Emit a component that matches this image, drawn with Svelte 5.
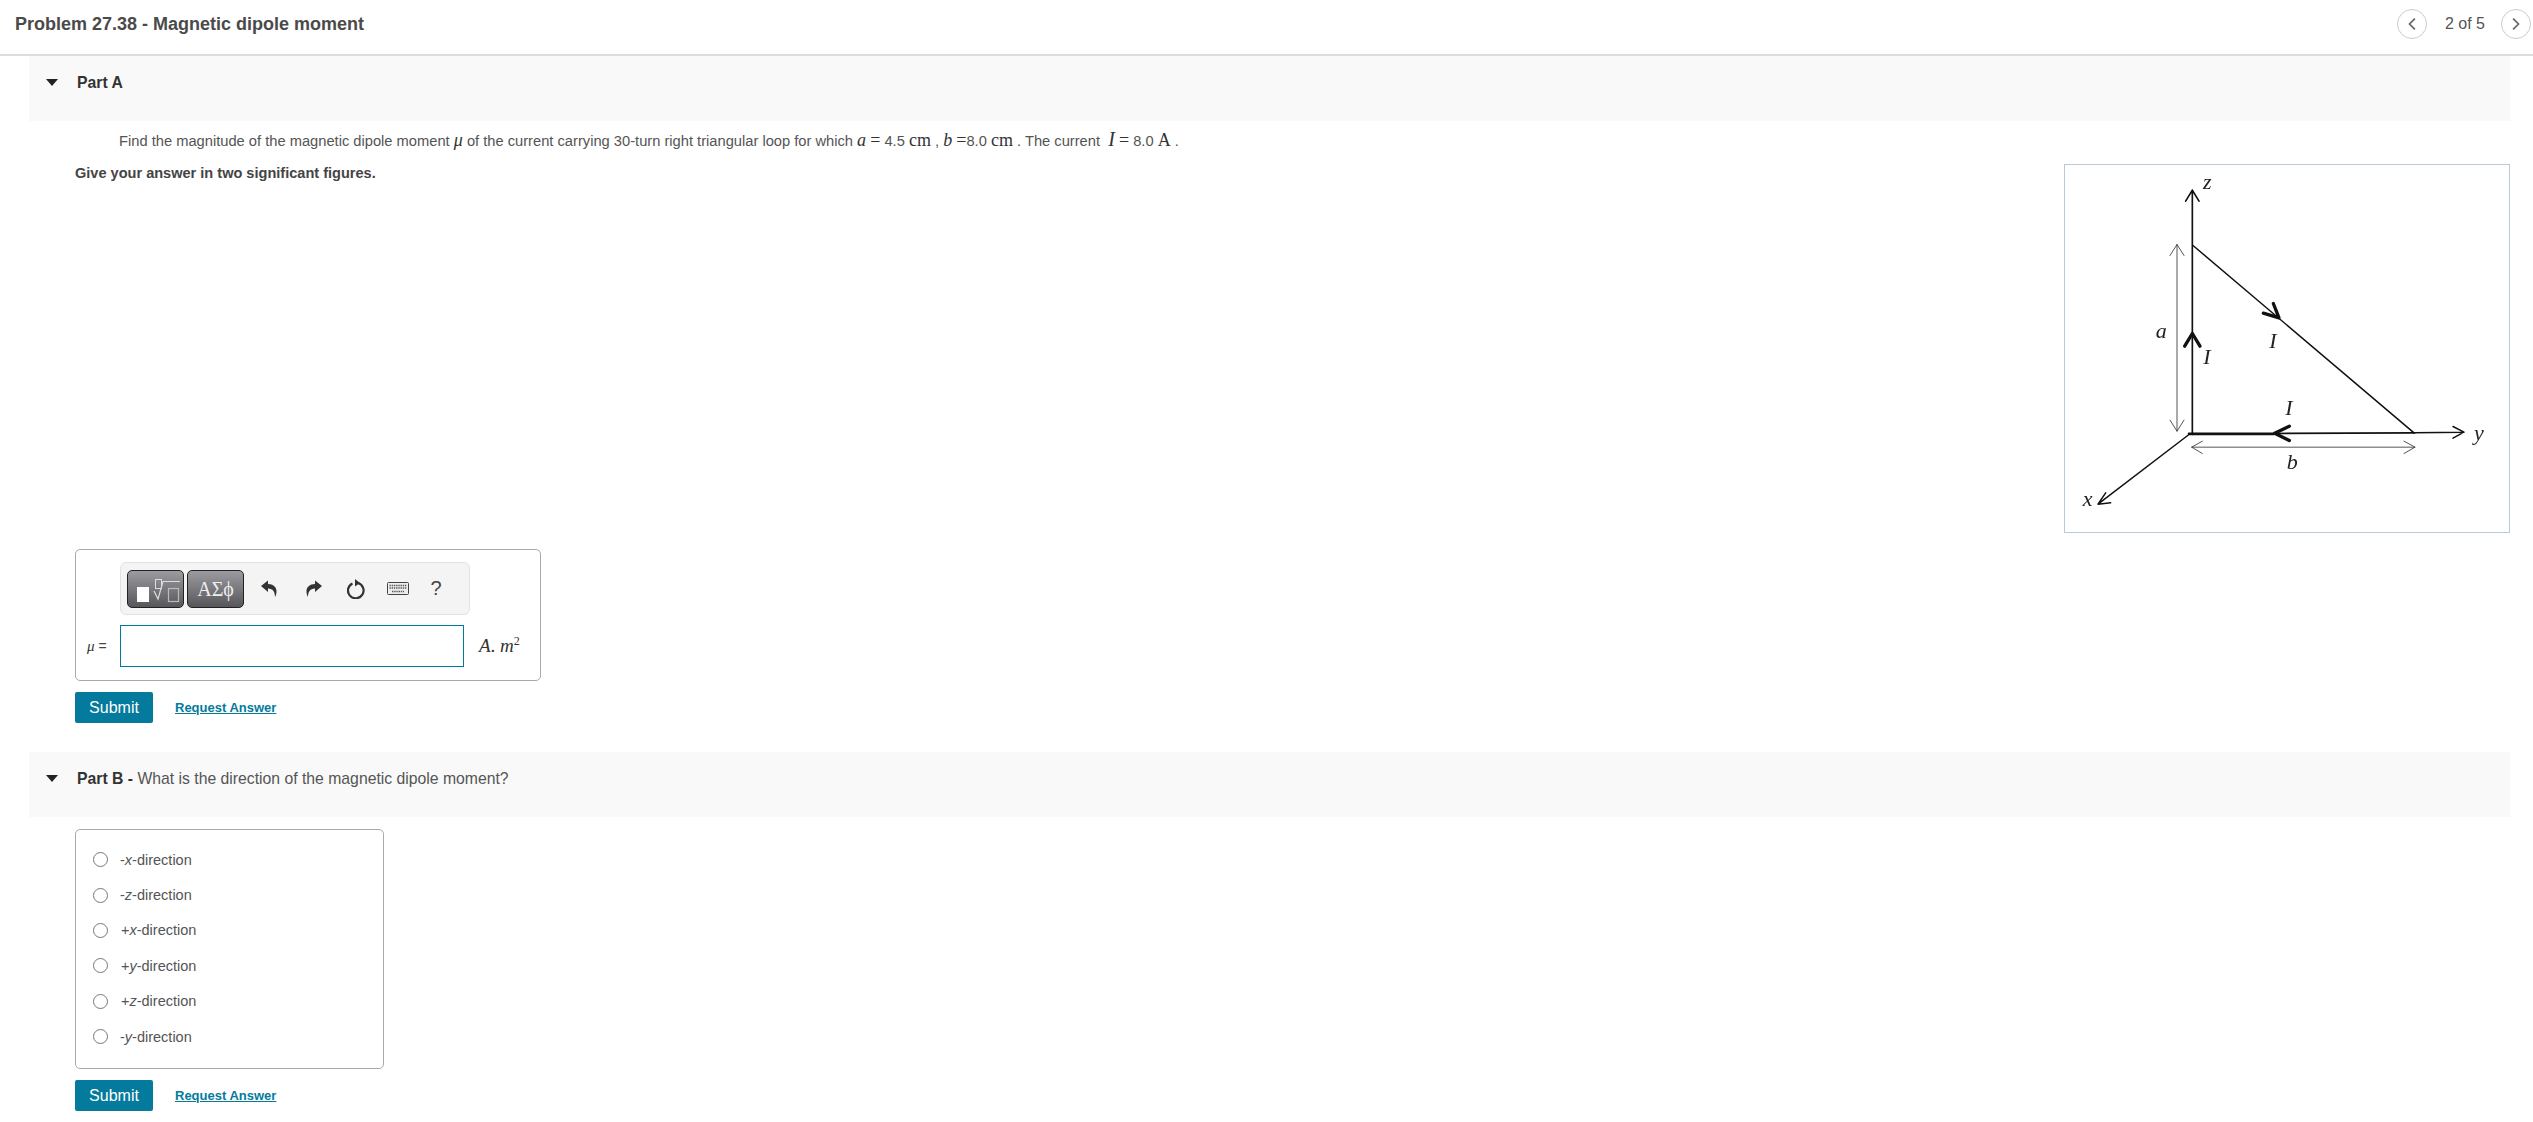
<script>
	const options = [
		{ sign: '-', axis: 'x' },
		{ sign: '-', axis: 'z' },
		{ sign: '+', axis: 'x' },
		{ sign: '+', axis: 'y' },
		{ sign: '+', axis: 'z' },
		{ sign: '-', axis: 'y' }
	];
	let choice = $state(null);
	let answer = $state('');
</script>

<div class="page">
	<header class="top">
		<h1>Problem 27.38 - Magnetic dipole moment</h1>
		<nav class="pager">
			<button class="round prev" aria-label="Previous">
				<svg viewBox="0 0 12 16" width="10" height="14"><path d="M9.5 1.5 L3 8 L9.5 14.5" /></svg>
			</button>
			<span class="count">2 of 5</span>
			<button class="round" aria-label="Next">
				<svg viewBox="0 0 12 16" width="10" height="14"><path d="M2.5 1.5 L9 8 L2.5 14.5" /></svg>
			</button>
		</nav>
	</header>

	<main class="parts">
		<section>
			<div class="band"><span class="caret"></span><strong>Part A</strong></div>
			<div class="body">
				<p class="prompt">
					Find the magnitude of the magnetic dipole moment <i class="m">μ</i> of the current carrying 30-turn right triangular loop for which <i class="m">a</i> <span class="m">=</span> 4.5 <span class="m">cm</span> , <i class="m">b</i> <span class="m">=</span>8.0 <span class="m">cm</span> . The current &nbsp;<i class="m big">I</i> <span class="m">=</span> 8.0 <span class="m">A</span> .
				</p>
				<figure class="figure">
					<svg viewBox="43 47 1332 1100" width="444" height="367">
						<g fill="none" stroke="#111" stroke-linecap="round" stroke-linejoin="round">
							<path stroke-width="5" d="M425 855 V122 M405 155 L425 122 L445 155" />
							<path stroke-width="4.5" d="M427 288 L1090 850" />
							<path stroke-width="10" d="M668 462 L685 505 L638 491" />
							<path stroke-width="10" d="M402 590 L425 552 L448 590" />
							<path stroke-width="8" d="M415 853 H670" />
							<path stroke-width="5" d="M670 852 L1092 850" />
							<path stroke-width="10" d="M716 830 L672 851 L716 873" />
							<path stroke-width="4.5" d="M1090 850 L1240 848 M1207 831 L1240 848 L1207 866" />
							<path stroke-width="4.5" d="M415 855 L142 1064 M165 1030 L142 1064 L180 1060" />
							<g stroke="#333" stroke-width="2.5">
								<path d="M379 285 V845 M358 318 L379 285 L400 318 M358 812 L379 845 L400 812" />
								<path d="M423 893 H1093 M455 875 L423 893 L455 912 M1060 875 L1093 893 L1060 912" />
							</g>
						</g>
						<g class="labels">
							<text x="457" y="118">z</text>
							<text x="315" y="565">a</text>
							<text x="458" y="642">I</text>
							<text x="656" y="595">I</text>
							<text x="704" y="795">I</text>
							<text x="1270" y="872">y</text>
							<text x="708" y="958">b</text>
							<text x="96" y="1068">x</text>
						</g>
					</svg>
				</figure>
				<p class="hint">Give your answer in two significant figures.</p>

				<div class="answer">
					<div class="toolbar">
						<button class="tpl" aria-label="Templates">
							<svg viewBox="0 0 57 38" width="57" height="38">
								<rect x="10" y="17" width="12" height="15" fill="#fff" />
								<rect x="28.5" y="9.5" width="6" height="9" fill="none" stroke="#ddd" />
								<path d="M27 21 L31 29 L36 11.5 H53" fill="none" stroke="#ddd" stroke-width="1.2" />
								<rect x="41.5" y="18.5" width="10" height="13" fill="none" stroke="#bbb" stroke-width="1.2" />
							</svg>
						</button>
						<button class="tpl greek">ΑΣϕ</button>
						<button class="tool first" aria-label="Undo">
							<svg viewBox="0 0 16 17" width="16" height="17"><path d="M0 6 L7 .5 V4 C12 4 16 7 15.5 12 C15.3 14 15 15.5 14 17 C14 12 12 8.5 7 8.5 V12 Z" /></svg>
						</button>
						<button class="tool" aria-label="Redo">
							<svg viewBox="0 0 16 17" width="16" height="17"><path d="M16 6 L9 .5 V4 C4 4 0 7 .5 12 C.7 14 1 15.5 2 17 C2 12 4 8.5 9 8.5 V12 Z" /></svg>
						</button>
						<button class="tool" aria-label="Reset">
							<svg viewBox="0 0 18 20" width="18" height="20"><path class="ring" d="M5.5 4.4 A7.8 7.8 0 1 0 11 4" /><path d="M8 0 L13 4 L8 7.5 Z" /></svg>
						</button>
						<button class="tool" aria-label="Keyboard">
							<svg viewBox="0 0 22 13" width="22" height="13">
								<rect x=".5" y=".5" width="21" height="12" rx="1" fill="#eee" stroke="#444" />
								<path d="M2.5 3.5 H19.5 M2.5 6 H19.5 M5 9.5 H17" fill="none" stroke="#555" stroke-width="1.4" stroke-dasharray="1.4 .8" />
							</svg>
						</button>
						<button class="tool help">?</button>
					</div>
					<div class="entry">
						<label for="mu"><i class="m">μ</i> =</label>
						<input id="mu" bind:value={answer} />
						<span class="unit"><i>A</i>. <i>m</i><sup>2</sup></span>
					</div>
				</div>
				<div class="actions">
					<button class="submit">Submit</button>
					<a href="#request">Request Answer</a>
				</div>
			</div>
		</section>

		<section class="part-b">
			<div class="band"><span class="caret"></span><strong>Part B -</strong>&nbsp;What is the direction of the magnetic dipole moment?</div>
			<div class="body">
				<div class="choices">
					{#each options as o, i}
						<label class="choice">
							<input type="radio" name="dir" value={i} bind:group={choice} />
							<span class:plus={o.sign === '+'}>{o.sign}<i>{o.axis}</i>-direction</span>
						</label>
					{/each}
				</div>
				<div class="actions">
					<button class="submit">Submit</button>
					<a href="#request">Request Answer</a>
				</div>
			</div>
		</section>
	</main>
</div>

<style>
	:global(body) {
		margin: 0;
		background: #fff;
		font-family: 'Liberation Sans', Arial, sans-serif;
		font-size: 14px;
		color: #444;
	}

	.page {
		width: 2533px;
		height: 1122px;
		overflow: hidden;
	}

	.top {
		display: flex;
		justify-content: space-between;
		align-items: center;
		height: 56px;
		padding: 0 2px 6px 15px;
		box-sizing: border-box;
		border-bottom: 2px solid #ddd;
	}

	h1 {
		margin: 0;
		font-size: 18px;
		font-weight: bold;
		color: #4a4a4a;
	}

	.pager {
		display: flex;
		align-items: center;
		gap: 16px;
	}

	.prev {
		margin-right: 2px;
	}

	.round {
		width: 30px;
		height: 30px;
		padding: 0;
		border: 1px solid #ccc;
		border-radius: 50%;
		background: #fff;
		display: flex;
		align-items: center;
		justify-content: center;
	}

	.round path {
		fill: none;
		stroke: #666;
		stroke-width: 2;
	}

	.count {
		font-size: 16px;
		color: #555;
	}

	.parts {
		padding: 0 23px 0 29px;
	}

	.band {
		display: flex;
		align-items: flex-start;
		height: 65px;
		padding-top: 17px;
		box-sizing: border-box;
		background: #f9f9f9;
		font-size: 15.75px;
		line-height: 19px;
		color: #555;
	}

	.band strong {
		color: #333;
	}

	.caret {
		width: 0;
		height: 0;
		margin: 6px 19px 0 17px;
		border-left: 6px solid transparent;
		border-right: 6px solid transparent;
		border-top: 7px solid #222;
	}

	.body {
		padding-left: 46px;
	}

	.prompt {
		margin: 0;
		padding: 8px 0 0 44px;
		height: 32px;
		line-height: 22px;
		font-size: 14.7px;
		color: #555;
	}

	.m {
		font-family: 'Liberation Serif', 'Times New Roman', serif;
		font-size: 18px;
		line-height: 1;
		color: #333;
	}

	.big {
		font-size: 20px;
	}

	.figure {
		float: right;
		margin: 3px 0 16px;
		border: 1px solid #b9c9d8;
		line-height: 0;
		filter: blur(0.3px);
	}

	.labels text {
		font-family: 'Liberation Serif', 'Times New Roman', serif;
		font-style: italic;
		font-size: 66px;
		fill: #222;
	}

	.hint {
		margin: 2px 0 0;
		font-size: 14.55px;
		font-weight: bold;
		line-height: 20px;
		color: #444;
	}

	.answer {
		clear: both;
		width: 466px;
		height: 132px;
		padding: 12px 0 0 44px;
		box-sizing: border-box;
		border: 1px solid #aaa;
		border-radius: 5px;
	}

	.toolbar {
		display: flex;
		align-items: center;
		width: 350px;
		height: 53px;
		padding-left: 6px;
		box-sizing: border-box;
		background: #f4f4f4;
		border: 1px solid #e2e2e2;
		border-radius: 6px;
	}

	.tpl {
		width: 55px;
		height: 36px;
		padding: 0;
		margin-right: 3px;
		line-height: 0;
		border: 1px solid #222;
		border-radius: 5px;
		background: linear-gradient(#9b9ba0, #57575b);
		box-sizing: content-box;
		overflow: hidden;
	}

	.tpl svg {
		margin: -1px;
	}

	.greek {
		color: #eee;
		font-family: 'Liberation Serif', 'DejaVu Serif', serif;
		font-size: 20px;
		line-height: 36px;
	}

	.tool {
		display: flex;
		align-items: center;
		justify-content: center;
		width: 42px;
		height: 38px;
		padding: 0;
		border: 0;
		background: none;
		color: #333;
	}

	.tool.first {
		margin-left: 1px;
		margin-right: 3px;
	}

	.tool svg path {
		fill: #333;
	}

	.tool svg .ring {
		fill: none;
		stroke: #333;
		stroke-width: 2.2;
	}

	.tool.help {
		width: 34px;
		font-family: 'Liberation Sans', Arial, sans-serif;
		font-size: 20px;
		color: #444;
	}

	.entry {
		display: flex;
		align-items: center;
		margin-top: 10px;
		margin-left: -33px;
	}

	.entry label {
		width: 33px;
		font-size: 14px;
		color: #444;
	}

	.entry label .m {
		font-size: 15px;
	}

	.entry input {
		width: 344px;
		height: 42px;
		padding: 0;
		box-sizing: border-box;
		border: 1px solid #007a9e;
		outline: 0;
		border-radius: 0;
	}

	.unit {
		margin-left: 15px;
		font-family: 'Liberation Serif', 'Times New Roman', serif;
		font-size: 19px;
		color: #333;
	}

	.unit sup {
		font-size: 12px;
		line-height: 0;
	}

	.actions {
		display: flex;
		align-items: center;
		gap: 22px;
		margin-top: 11px;
	}

	.submit {
		width: 78px;
		height: 31px;
		padding: 0;
		border: 0;
		border-radius: 2px;
		background: #047a9c;
		color: #fff;
		font-family: 'Liberation Sans', Arial, sans-serif;
		font-size: 16px;
	}

	.actions a {
		color: #047a9c;
		font-size: 13px;
		font-weight: bold;
	}

	.part-b {
		margin-top: 29px;
	}

	.choices {
		width: 309px;
		height: 240px;
		margin-top: 12px;
		padding: 12px 0 0 17px;
		box-sizing: border-box;
		border: 1px solid #aaa;
		border-radius: 5px;
	}

	.choice {
		display: flex;
		align-items: center;
		gap: 12px;
		height: 35.4px;
		font-size: 14.5px;
		color: #555;
	}

	.choice input {
		appearance: none;
		width: 15px;
		height: 15px;
		margin: 0;
		border: 1.5px solid #777;
		border-radius: 50%;
		background: #fff;
	}

	.choice span {
		display: inline-block;
	}

	.choice span.plus {
		margin-left: 1px;
	}
</style>
